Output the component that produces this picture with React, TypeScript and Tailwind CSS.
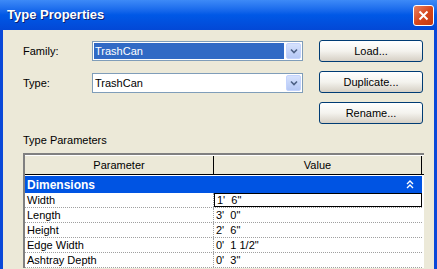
import React from 'react';

const rows: { name: string; value: string }[] = [
    { name: 'Width', value: `1'  6"` },
    { name: 'Length', value: `3'  0"` },
    { name: 'Height', value: `2'  6"` },
    { name: 'Edge Width', value: `0'  1 1/2"` },
    { name: 'Ashtray Depth', value: `0'  3"` },
];

const Chevron = () => (
    <svg width="8" height="6" viewBox="0 0 8 6">
        <path d="M1 1.5 L4 4.5 L7 1.5" stroke="#4d6185" strokeWidth="1.6" fill="none" />
    </svg>
);

const Combo: React.FC<{ value: string; selected?: boolean }> = ({ value, selected }) => (
    <div className="w-[211px] h-[20px] border border-[#7f9db9] bg-white flex items-center p-[1px]">
        <div className="flex-1 h-full flex items-center">
            <span className={`h-full flex-1 flex items-center pl-[1px] ${selected ? 'bg-[#316ac5] text-white' : 'text-black'}`}>
                {value}
            </span>
        </div>
        <div className="w-[15px] h-full ml-[2px] rounded-[2px] bg-gradient-to-b from-[#d6e2fd] to-[#b5c8f5] border border-[#c3d3fd] flex items-center justify-center">
            <Chevron />
        </div>
    </div>
);

const XpButton: React.FC<{ label: string }> = ({ label }) => (
    <button className="w-[104px] h-[22px] rounded-[3px] border border-[#003c74] bg-gradient-to-b from-[#ffffff] via-[#f4f3ee] to-[#d6d0c5] text-black text-[11px] leading-none">
        {label}
    </button>
);

export default function App() {
    return (
        <div className="w-[437px] h-[269px] overflow-hidden bg-[#0a48d8] flex flex-col font-['Liberation_Sans',Arial,sans-serif] text-[11px] text-black">
            {/* title bar */}
            <div className="h-[30px] shrink-0 flex items-center justify-between pl-[7px] pr-[3px] bg-gradient-to-b from-[#3d8af7] via-[#0058e6] to-[#0348d6]">
                <span className="text-white font-bold text-[13px] [text-shadow:1px_1px_0_#0a1e6e]">Type Properties</span>
                <div className="w-[21px] h-[21px] rounded-[3px] border border-white bg-gradient-to-br from-[#e8805e] via-[#d6471c] to-[#c23a12] flex items-center justify-center">
                    <svg width="11" height="11" viewBox="0 0 11 11">
                        <path d="M1.5 1.5 L9.5 9.5 M9.5 1.5 L1.5 9.5" stroke="white" strokeWidth="2" />
                    </svg>
                </div>
            </div>

            {/* body */}
            <div className="flex-1 mx-[3px] bg-[#ece9d8] pl-[20px] pt-[10px]">
                <div className="flex">
                    <div className="flex flex-col gap-[12px] mt-[1px]">
                        <div className="flex items-center">
                            <span className="w-[69px]">Family:</span>
                            <Combo value="TrashCan" selected />
                        </div>
                        <div className="flex items-center">
                            <span className="w-[69px]">Type:</span>
                            <Combo value="TrashCan" />
                        </div>
                    </div>
                    <div className="ml-[16px] flex flex-col gap-[9px]">
                        <XpButton label="Load..." />
                        <XpButton label="Duplicate..." />
                        <XpButton label="Rename..." />
                    </div>
                </div>

                <div className="mt-[10px] h-[13px] leading-[13px]">Type Parameters</div>

                <div className="mt-[6px] w-[401px] border-t-2 border-l-2 border-t-[#808080] border-l-[#808080] bg-white">
                    <div className="h-[20px] flex bg-[#ece9d8] border-b border-black border-t border-t-white">
                        <div className="w-[189px] flex items-center justify-center border-r border-black">Parameter</div>
                        <div className="w-[208px] flex items-center justify-center border-r border-black">Value</div>
                    </div>
                    <div className="mt-[1px] h-[17px] flex items-center justify-between bg-[#0054e3] text-white font-bold text-[12px] pl-[2px] pr-[8px] w-[397px]">
                        <span>Dimensions</span>
                        <svg width="8" height="9" viewBox="0 0 8 9">
                            <path d="M1 4 L4 1 L7 4 M1 8 L4 5 L7 8" stroke="white" strokeWidth="1.4" fill="none" />
                        </svg>
                    </div>
                    {rows.map((r, i) => (
                        <div key={r.name} className="h-[15px] flex border-b border-dotted border-[#a0a0a0] w-[397px]">
                            <div className="w-[189px] pl-[2px] flex items-center border-r border-dotted border-[#a0a0a0]">{r.name}</div>
                            <div className={`flex-1 pl-[2px] flex items-center whitespace-pre ${i === 0 ? 'border border-black' : ''}`}>{r.value}</div>
                        </div>
                    ))}
                </div>
            </div>
        </div>
    );
}
